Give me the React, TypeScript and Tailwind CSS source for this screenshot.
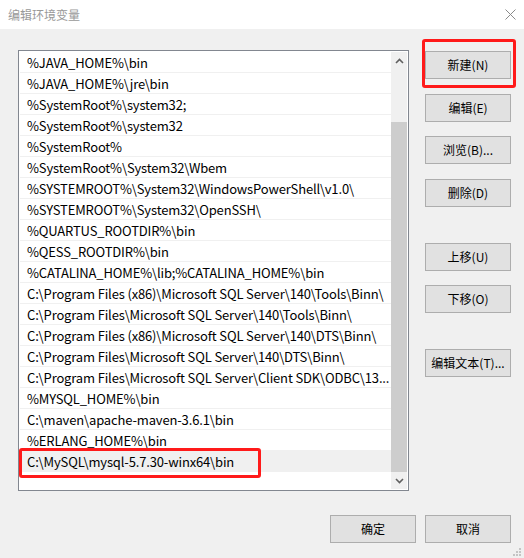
import React from "react";

const paths = [
  "%JAVA_HOME%\\bin",
  "%JAVA_HOME%\\jre\\bin",
  "%SystemRoot%\\system32;",
  "%SystemRoot%\\system32",
  "%SystemRoot%",
  "%SystemRoot%\\System32\\Wbem",
  "%SYSTEMROOT%\\System32\\WindowsPowerShell\\v1.0\\",
  "%SYSTEMROOT%\\System32\\OpenSSH\\",
  "%QUARTUS_ROOTDIR%\\bin",
  "%QESS_ROOTDIR%\\bin",
  "%CATALINA_HOME%\\lib;%CATALINA_HOME%\\bin",
  "C:\\Program Files (x86)\\Microsoft SQL Server\\140\\Tools\\Binn\\",
  "C:\\Program Files\\Microsoft SQL Server\\140\\Tools\\Binn\\",
  "C:\\Program Files (x86)\\Microsoft SQL Server\\140\\DTS\\Binn\\",
  "C:\\Program Files\\Microsoft SQL Server\\140\\DTS\\Binn\\",
  "C:\\Program Files\\Microsoft SQL Server\\Client SDK\\ODBC\\13...",
  "%MYSQL_HOME%\\bin",
  "C:\\maven\\apache-maven-3.6.1\\bin",
  "%ERLANG_HOME%\\bin",
  "C:\\MySQL\\mysql-5.7.30-winx64\\bin",
];

function Btn({ children, className = "" }: { children: React.ReactNode; className?: string }) {
  return (
    <button
      className={`flex h-[28px] w-[86px] items-center justify-center border border-[#adadad] bg-[#e1e1e1] text-[12px] text-black ${className}`}
    >
      {children}
    </button>
  );
}

function Chevron({ up }: { up?: boolean }) {
  return (
    <svg width="9" height="6" viewBox="0 0 9 6" className={up ? "" : "rotate-180"}>
      <path d="M1 5 L4.5 1.5 L8 5" fill="none" stroke="#606060" strokeWidth="1.6" />
    </svg>
  );
}

export default function App() {
  return (
    <div
      className="relative flex h-[558px] w-[524px] flex-col overflow-hidden bg-[#f0f0f0]"
      style={{ fontFamily: '"Noto Sans CJK SC", "Noto Sans", sans-serif' }}
    >
      {/* title bar */}
      <div className="flex h-[29px] shrink-0 items-center justify-between bg-white pl-[8px] pr-[8px]">
        <span className="text-[12px] text-[#999999]">编辑环境变量</span>
        <svg width="11" height="11" viewBox="0 0 11 11">
          <path d="M0.5 0.5 L10.5 10.5 M10.5 0.5 L0.5 10.5" stroke="#8a8a8a" strokeWidth="1" />
        </svg>
      </div>

      <div className="flex flex-1 flex-col">
        <div className="flex pl-[18px] pt-[21px]">
          {/* path list */}
          <div className="flex h-[441px] w-[391px] border border-[#828790] bg-white p-px">
            <div className="flex-1">
              {paths.map((p, i) => (
                <div
                  key={p}
                  className={`flex h-[21px] items-center border-b border-[#f0f0f0] pl-[7px] text-[13px] leading-none tracking-[-0.15px] whitespace-nowrap text-black ${
                    i === paths.length - 1 ? "bg-[#f0f0f0]" : ""
                  }`}
                >
                  {p}
                </div>
              ))}
            </div>
            <div className="flex w-[16px] flex-col bg-[#f0f0f0]">
              <div className="flex h-[17px] items-center justify-center">
                <Chevron up />
              </div>
              <div className="flex flex-1 flex-col">
                <div className="h-[53px]" />
                <div className="flex-1 bg-[#cdcdcd]" />
              </div>
              <div className="flex h-[17px] items-center justify-center">
                <Chevron />
              </div>
            </div>
          </div>

          {/* action buttons */}
          <div className="ml-[16px] flex flex-col pt-px">
            <Btn>新建(N)</Btn>
            <Btn className="mt-[15px]">编辑(E)</Btn>
            <Btn className="mt-[14px]">浏览(B)...</Btn>
            <Btn className="mt-[15px]">删除(D)</Btn>
            <Btn className="mt-[36px]">上移(U)</Btn>
            <Btn className="mt-[14px]">下移(O)</Btn>
            <Btn className="mt-[36px]">编辑文本(T)...</Btn>
          </div>
        </div>

        <div className="flex justify-end gap-[9px] pr-[13px] pt-[24px]">
          <Btn>确定</Btn>
          <Btn>取消</Btn>
        </div>
      </div>

      {/* resize grip */}
      <svg width="9" height="9" viewBox="0 0 9 9" className="absolute bottom-[1px] right-[2px]">
        <g fill="#c4c4c4">
          <rect x="6" y="0" width="2" height="2" />
          <rect x="3" y="3" width="2" height="2" />
          <rect x="6" y="3" width="2" height="2" />
          <rect x="0" y="6" width="2" height="2" />
          <rect x="3" y="6" width="2" height="2" />
          <rect x="6" y="6" width="2" height="2" />
        </g>
      </svg>

      {/* red highlight marks */}
      <div className="pointer-events-none absolute left-[422px] top-[39px] h-[49px] w-[94px] rounded-[3px] border-[3px] border-[#ff1a1a]" />
      <div className="pointer-events-none absolute left-[19px] top-[448px] h-[30px] w-[242px] rounded-[3px] border-[3px] border-[#ff1a1a]" />
    </div>
  );
}
